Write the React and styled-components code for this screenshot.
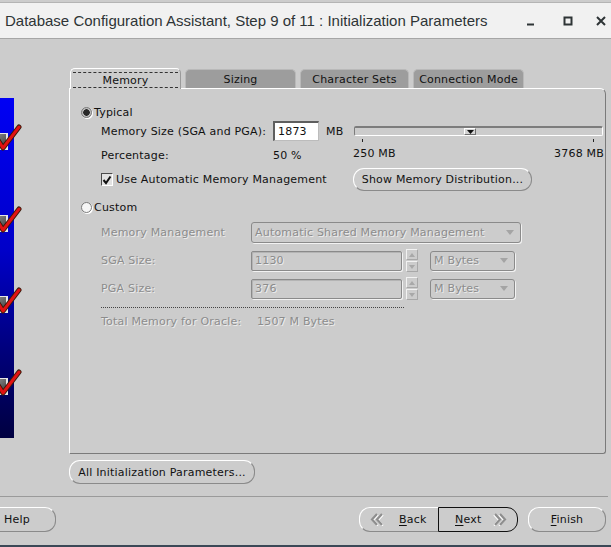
import React from 'react';
import styled, { createGlobalStyle } from 'styled-components';

const GlobalStyle = createGlobalStyle`
  html, body { margin: 0; padding: 0; background: #cccccc; }
  body { font-family: "DejaVu Sans", Verdana, sans-serif; }
`;

const MIN_MB = 250;
const MAX_MB = 3768;
const CURRENT_MB = 1873;
const TRACK_W = 249;

const Window = styled.div`
  box-sizing: border-box;
  width: 611px;
  height: 547px;
  overflow: hidden;
  display: flex;
  flex-direction: column;
  background: #cccccc;
  border-bottom: 2px solid #3b4856;
  font-family: "DejaVu Sans", Verdana, sans-serif;
  font-size: 11px;
  letter-spacing: 0.2px;
  color: #111;
`;

const TitleBar = styled.div`
  box-sizing: border-box;
  margin-top: 2px;
  height: 37px;
  flex-shrink: 0;
  display: flex;
  align-items: center;
  padding: 0 3px 0 5px;
  background: #f1f1f1;
  border-top: 1px solid #b4b4b4;
  border-bottom: 1px solid #a6a6a6;
  letter-spacing: 0;
`;

const Title = styled.div`
  font-family: "Liberation Sans", Arial, sans-serif;
  font-size: 15px;
  color: #2e3436;
  white-space: nowrap;
`;

const WinControls = styled.div`
  margin-left: auto;
  display: flex;
  align-items: center;
`;

const WinButton = styled.div`
  width: 14px;
  height: 14px;
  display: flex;
  align-items: center;
  justify-content: center;
  margin-left: ${p => p.$gap}px;
`;

const Upper = styled.div`
  display: flex;
  flex-shrink: 0;
`;

const Rail = styled.div`
  width: 69px;
  flex-shrink: 0;
  padding-top: 59px;
`;

const Main = styled.div`
  width: 537px;
  padding-top: 29px;
  display: flex;
  flex-direction: column;
`;

const TabRow = styled.div`
  display: flex;
  align-items: flex-start;
  height: 20px;
  padding-left: 1px;
`;

const Tab = styled.div`
  box-sizing: border-box;
  position: relative;
  width: ${p => p.$w}px;
  margin-right: 4px;
  display: flex;
  align-items: center;
  justify-content: center;
  border-radius: 5px 5px 0 0;
  white-space: nowrap;
  ${p => p.$active ? `
    z-index: 2;
    height: 21px;
    background: #cccccc;
    border-top: 1px solid #ffffff;
    border-left: 1px solid #ffffff;
    border-right: 1px solid #9a9a9a;
    padding: 3px 2px 1px 2px;
  ` : `
    height: 19px;
    margin-top: 1px;
    background: #9d9d9d;
    border: 1px solid #b9b9b9;
    border-bottom: none;
  `}
`;

const FocusRect = styled.div`
  box-sizing: border-box;
  width: 100%;
  height: 100%;
  display: flex;
  align-items: center;
  justify-content: center;
  border-top: 1px dashed #333;
  border-bottom: 1px dashed #333;
`;

const Panel = styled.div`
  box-sizing: border-box;
  height: 366px;
  border-top: 1px solid #ffffff;
  border-left: 1px solid #ffffff;
  border-right: 1px solid #7a7a7a;
  border-bottom: 1px solid #7a7a7a;
  border-radius: 0 6px 3px 0;
  padding: 15px 0 0 11px;
  display: flex;
  flex-direction: column;
`;

const RadioRow = styled.div`
  height: 16px;
  display: flex;
  align-items: center;
  gap: 2px;
  margin-top: ${p => p.$mt || 0}px;
`;

const Radio = styled.span`
  box-sizing: border-box;
  width: 11px;
  height: 11px;
  border-radius: 50%;
  border: 1px solid #7a7a7a;
  background: ${p => p.$on
    ? 'radial-gradient(circle, #2a2a2a 0 3px, #bdbdbd 3.5px)'
    : '#f6f6f6'};
  box-shadow: 1px 1px 0 #ffffff;
`;

const TypicalGrid = styled.div`
  margin: 1px 0 0 20px;
  display: grid;
  grid-template-columns: 172px 80px 251px;
  grid-template-rows: 20px 16px;
  row-gap: 6px;
  align-items: center;
  white-space: nowrap;
`;

const ValueCell = styled.div`
  display: flex;
  align-items: center;
  gap: 7px;
`;

const TextInput = styled.div`
  box-sizing: border-box;
  width: 46px;
  height: 20px;
  display: flex;
  align-items: center;
  padding-left: 3px;
  background: #ffffff;
  border-top: 2px solid #5e5e5e;
  border-left: 2px solid #5e5e5e;
  border-right: 1px solid #bcbcbc;
  border-bottom: 1px solid #bcbcbc;
`;

const Slider = styled.div`
  grid-column: 3;
  grid-row: 1 / span 2;
  align-self: stretch;
  display: flex;
  flex-direction: column;
`;

const Track = styled.div`
  box-sizing: border-box;
  position: relative;
  margin: 5px 0 0 1px;
  width: ${TRACK_W}px;
  height: 10px;
  border-top: 2px solid #7c7c7c;
  border-left: 1px solid #7c7c7c;
  border-right: 1px solid #ffffff;
  border-bottom: 1px solid #ffffff;
  border-radius: 2px;
`;

const Thumb = styled.div`
  box-sizing: border-box;
  position: absolute;
  top: 0;
  width: 12px;
  height: 7px;
  display: flex;
  align-items: center;
  justify-content: center;
  background: #d4d4d4;
  border: 1px solid #6e6e6e;
  border-top-color: #ffffff;
  border-left-color: #ffffff;
`;

const Ticks = styled.div`
  display: flex;
  justify-content: space-between;
  margin-top: 3px;
  padding: 0 10px 0 9px;
`;

const Tick = styled.span`
  width: 1px;
  height: 3px;
  background: #222;
`;

const Scale = styled.div`
  display: flex;
  justify-content: space-between;
  margin-top: 4px;
  line-height: 16px;
`;

const CheckRow = styled.div`
  margin: 5px 0 0 20px;
  height: 23px;
  display: flex;
  align-items: center;
`;

const CheckLabel = styled.div`
  width: 252px;
  display: flex;
  align-items: center;
  gap: 3px;
  white-space: nowrap;
`;

const Checkbox = styled.span`
  box-sizing: border-box;
  width: 12px;
  height: 13px;
  display: flex;
  align-items: center;
  justify-content: center;
  background: #e2e2e2;
  border-top: 1px solid #4a4a4a;
  border-left: 1px solid #4a4a4a;
  border-right: 1px solid #ffffff;
  border-bottom: 1px solid #ffffff;
`;

const PillButton = styled.div`
  box-sizing: border-box;
  width: ${p => p.$w}px;
  height: ${p => p.$h || 24}px;
  display: flex;
  align-items: center;
  justify-content: ${p => p.$left ? 'flex-start' : 'center'};
  padding-left: ${p => p.$pl || 0}px;
  flex-shrink: 0;
  background: #cccccc;
  border: 1px solid #8a8a8a;
  border-top-color: #ffffff;
  border-left-color: #ffffff;
  border-radius: 11px;
  color: #111;
  white-space: nowrap;
`;

const FieldRow = styled.div`
  margin: ${p => p.$mt}px 0 0 20px;
  height: ${p => p.$h}px;
  display: flex;
  align-items: center;
`;

const DimLabel = styled.div`
  width: ${p => p.$w || 150}px;
  flex-shrink: 0;
  color: #8c8c8c;
  text-shadow: 1px 1px 0 #ececec;
  white-space: nowrap;
`;

const DimText = styled.span`
  color: #8c8c8c;
  text-shadow: 1px 1px 0 #ececec;
  white-space: nowrap;
`;

const DimBox = styled.div`
  box-sizing: border-box;
  width: ${p => p.$w}px;
  height: ${p => p.$h || 20}px;
  flex-shrink: 0;
  display: flex;
  align-items: center;
  justify-content: space-between;
  padding: 0 6px 0 3px;
  margin-left: ${p => p.$ml || 0}px;
  border: 1px solid #8a8a8a;
  border-radius: ${p => p.$combo ? 3 : 2}px;
  box-shadow: 1px 1px 0 #f2f2f2${p => p.$combo ? '' : ', inset 1px 1px 0 #b4b4b4'};
`;

const Spinner = styled.div`
  box-sizing: border-box;
  width: 12px;
  height: 23px;
  margin-left: 4px;
  display: flex;
  flex-direction: column;
  gap: 1px;
`;

const SpinHalf = styled.div`
  box-sizing: border-box;
  flex: 1;
  display: flex;
  align-items: center;
  justify-content: center;
  border: 1px solid #a8a8a8;
  border-top-color: #f2f2f2;
  border-left-color: #f2f2f2;
`;

const DottedRule = styled.div`
  margin: 7px 0 0 20px;
  width: 303px;
  border-top: 1px dotted #444;
`;

const BelowPanel = styled.div`
  margin-top: 6px;
  display: flex;
`;

const Separator = styled.div`
  margin-top: 12px;
  width: 608px;
  height: 1px;
  background: #9a9a9a;
  flex-shrink: 0;
`;

const Footer = styled.div`
  margin-top: 10px;
  height: 25px;
  display: flex;
  align-items: center;
  padding-right: 5px;
`;

const HelpButton = styled(PillButton)`
  margin-left: -20px;
`;

const NavGroup = styled.div`
  margin-left: auto;
  display: flex;
`;

const BackButton = styled(PillButton)`
  border-radius: 11px 0 0 11px;
  border-right: none;
  gap: 15px;
`;

const NextButton = styled(PillButton)`
  border: 1px solid #111;
  border-radius: 0 11px 11px 0;
  gap: 12px;
`;

const FinishButton = styled(PillButton)`
  margin-left: 10px;
`;

const Under = styled.span`
  text-decoration: underline;
  text-underline-offset: 2px;
`;

function StepRail() {
  const centers = [43, 125, 206, 288];
  return (
    <svg width="26" height="340" viewBox="0 0 26 340">
      <defs>
        <linearGradient id="railBlue" x1="0" y1="0" x2="0" y2="1">
          <stop offset="0" stopColor="#0000f4" />
          <stop offset="0.45" stopColor="#0000c8" />
          <stop offset="0.75" stopColor="#00007a" />
          <stop offset="1" stopColor="#000040" />
        </linearGradient>
        <linearGradient id="boxGrey" x1="0" y1="0" x2="1" y2="1">
          <stop offset="0" stopColor="#9a9a9a" />
          <stop offset="1" stopColor="#3c3c3c" />
        </linearGradient>
      </defs>
      <rect x="0" y="0" width="14" height="340" fill="url(#railBlue)" />
      {centers.map(c => (
        <g key={c}>
          <rect x="-9" y={c - 8} width="17" height="17" fill="#e6e6e6" />
          <rect x="-9" y={c - 7} width="15" height="14" fill="url(#boxGrey)" />
          <path d={`M-2 ${c - 1} L3 ${c + 7} L19 ${c - 14}`} fill="none" stroke="#3a1a0a" strokeWidth="5" strokeLinecap="round" strokeLinejoin="round" />
          <path d={`M-2 ${c - 1} L3 ${c + 7} L19 ${c - 14}`} fill="none" stroke="#e21212" strokeWidth="3" strokeLinecap="round" strokeLinejoin="round" />
        </g>
      ))}
    </svg>
  );
}

function Chevrons({ dir }) {
  const flip = dir === 'right' ? 'scale(-1,1) translate(-14,0)' : undefined;
  return (
    <svg width="14" height="13" viewBox="0 0 14 13">
      <g transform={flip}>
        <path d="M7 1 L2 6.5 L7 12 M12 1 L7 6.5 L12 12" fill="none" stroke="#ffffff" strokeWidth="2.2" transform="translate(0.8,0.8)" />
        <path d="M7 1 L2 6.5 L7 12 M12 1 L7 6.5 L12 12" fill="none" stroke="#8e8e8e" strokeWidth="2.2" />
      </g>
    </svg>
  );
}

function ComboArrow() {
  return (
    <svg width="8" height="5" viewBox="0 0 8 5">
      <path d="M0 0 H8 L4 5 Z" fill="#a4a4a4" />
    </svg>
  );
}

function SpinArrow({ up }) {
  return (
    <svg width="6" height="4" viewBox="0 0 6 4">
      <path d={up ? 'M0 4 H6 L3 0 Z' : 'M0 0 H6 L3 4 Z'} fill="#a8a8a8" />
    </svg>
  );
}

export default function App() {
  const thumbLeft = Math.round(((CURRENT_MB - MIN_MB) / (MAX_MB - MIN_MB)) * TRACK_W) - 6;

  const tabs = [
    { label: 'Memory', w: 111, active: true },
    { label: 'Sizing', w: 111 },
    { label: 'Character Sets', w: 109 },
    { label: 'Connection Mode', w: 111 },
  ];

  return (
    <Window>
      <GlobalStyle />
      <TitleBar>
        <Title>Database Configuration Assistant, Step 9 of 11 : Initialization Parameters</Title>
        <WinControls>
          <WinButton $gap={0}>
            <svg width="10" height="10" viewBox="0 0 10 10">
              <rect x="1" y="7.5" width="7" height="2" fill="#2e3436" />
            </svg>
          </WinButton>
          <WinButton $gap={23}>
            <svg width="10" height="10" viewBox="0 0 10 10">
              <rect x="1.5" y="1.5" width="7" height="7" fill="none" stroke="#2e3436" strokeWidth="2" />
            </svg>
          </WinButton>
          <WinButton $gap={19}>
            <svg width="10" height="10" viewBox="0 0 10 10">
              <path d="M1 1 L9 9 M9 1 L1 9" stroke="#2e3436" strokeWidth="2" />
            </svg>
          </WinButton>
        </WinControls>
      </TitleBar>

      <Upper>
        <Rail>
          <StepRail />
        </Rail>
        <Main>
          <TabRow>
            {tabs.map(t => (
              <Tab key={t.label} $w={t.w} $active={t.active}>
                {t.active ? <FocusRect>{t.label}</FocusRect> : t.label}
              </Tab>
            ))}
          </TabRow>
          <Panel>
            <RadioRow>
              <Radio $on />
              <span>Typical</span>
            </RadioRow>

            <TypicalGrid>
              <div>Memory Size (SGA and PGA):</div>
              <ValueCell>
                <TextInput>1873</TextInput>
                <span>MB</span>
              </ValueCell>
              <Slider>
                <Track>
                  <Thumb style={{ left: thumbLeft }}>
                    <svg width="7" height="4" viewBox="0 0 7 4">
                      <path d="M0 0 H7 L3.5 4 Z" fill="#111" />
                    </svg>
                  </Thumb>
                </Track>
                <Ticks>
                  <Tick />
                  <Tick />
                </Ticks>
                <Scale>
                  <span>{MIN_MB} MB</span>
                  <span>{MAX_MB} MB</span>
                </Scale>
              </Slider>
              <div>Percentage:</div>
              <div>50 %</div>
            </TypicalGrid>

            <CheckRow>
              <CheckLabel>
                <Checkbox>
                  <svg width="10" height="10" viewBox="0 0 10 10">
                    <path d="M1.5 5 L4 8 L8.5 1.5" fill="none" stroke="#111" strokeWidth="2" />
                  </svg>
                </Checkbox>
                <span>Use Automatic Memory Management</span>
              </CheckLabel>
              <PillButton $w={179} $h={23}>Show Memory Distribution...</PillButton>
            </CheckRow>

            <RadioRow $mt={8}>
              <Radio />
              <span>Custom</span>
            </RadioRow>

            <FieldRow $mt={7} $h={21}>
              <DimLabel>Memory Management</DimLabel>
              <DimBox $w={270} $h={21} $combo>
                <DimText>Automatic Shared Memory Management</DimText>
                <ComboArrow />
              </DimBox>
            </FieldRow>

            <FieldRow $mt={6} $h={23}>
              <DimLabel>SGA Size:</DimLabel>
              <DimBox $w={151}>
                <DimText>1130</DimText>
              </DimBox>
              <Spinner>
                <SpinHalf><SpinArrow up /></SpinHalf>
                <SpinHalf><SpinArrow /></SpinHalf>
              </Spinner>
              <DimBox $w={85} $ml={12} $combo>
                <DimText>M Bytes</DimText>
                <ComboArrow />
              </DimBox>
            </FieldRow>

            <FieldRow $mt={5} $h={23}>
              <DimLabel>PGA Size:</DimLabel>
              <DimBox $w={151}>
                <DimText>376</DimText>
              </DimBox>
              <Spinner>
                <SpinHalf><SpinArrow up /></SpinHalf>
                <SpinHalf><SpinArrow /></SpinHalf>
              </Spinner>
              <DimBox $w={85} $ml={12} $combo>
                <DimText>M Bytes</DimText>
                <ComboArrow />
              </DimBox>
            </FieldRow>

            <DottedRule />

            <FieldRow $mt={5} $h={16}>
              <DimLabel $w={156}>Total Memory for Oracle:</DimLabel>
              <DimText>1507 M Bytes</DimText>
            </FieldRow>
          </Panel>
          <BelowPanel>
            <PillButton $w={186}>All Initialization Parameters...</PillButton>
          </BelowPanel>
        </Main>
      </Upper>

      <Separator />

      <Footer>
        <HelpButton $w={76} $h={25} $left $pl={23}>Help</HelpButton>
        <NavGroup>
          <BackButton $w={79} $h={25} $left $pl={10}>
            <Chevrons dir="left" />
            <span><Under>B</Under>ack</span>
          </BackButton>
          <NextButton $w={80} $h={25} $left $pl={16}>
            <span><Under>N</Under>ext</span>
            <Chevrons dir="right" />
          </NextButton>
        </NavGroup>
        <FinishButton $w={78} $h={25}><span><Under>F</Under>inish</span></FinishButton>
      </Footer>
    </Window>
  );
}
